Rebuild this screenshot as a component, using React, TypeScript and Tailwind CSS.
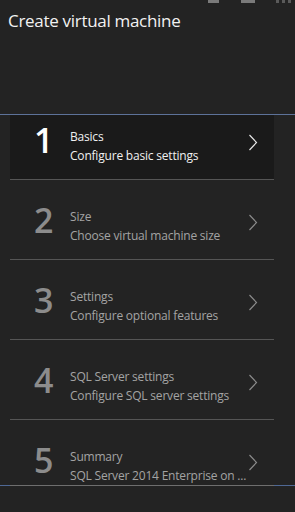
import { ChevronRight } from "lucide-react";

type Step = {
  num: string;
  title: string;
  desc: string;
};

const steps: Step[] = [
  { num: "1", title: "Basics", desc: "Configure basic settings" },
  { num: "2", title: "Size", desc: "Choose virtual machine size" },
  { num: "3", title: "Settings", desc: "Configure optional features" },
  { num: "4", title: "SQL Server settings", desc: "Configure SQL server settings" },
  { num: "5", title: "Summary", desc: "SQL Server 2014 Enterprise on ..." },
];

function Chevron({ active }: { active: boolean }) {
  return (
    <svg
      width="10"
      height="17"
      viewBox="0 0 10 17"
      fill="none"
      stroke={active ? "#e6e6e6" : "#8a8a8a"}
      strokeWidth={1.2}
      className="mt-[11px] shrink-0"
    >
      <path d="M1.5 1 L8.5 8.5 L1.5 16" />
    </svg>
  );
}

export default function App() {
  return (
    <div className="w-[295px] h-[512px] bg-[#232323] overflow-hidden font-['Open_Sans',sans-serif]">
      {/* cut-off window controls */}
      <div className="h-[4px] flex">
        <div className="ml-[208px] w-[11px] h-[3px] bg-[#7a7a7a]" />
        <div className="ml-[22px] w-[14px] h-[3px] bg-[#7a7a7a]" />
        <div className="ml-[21px] flex gap-[3px]">
          <div className="w-[3px] h-[3px] bg-[#5a5a5a]" />
          <div className="w-[3px] h-[3px] bg-[#5a5a5a]" />
          <div className="w-[3px] h-[3px] bg-[#5a5a5a]" />
        </div>
      </div>

      <div className="h-[110px] pt-[5px]">
        <h1 className="ml-[8px] text-[17px] leading-[24px] text-[#f2f2f2] tracking-[-0.3px]">
          Create virtual machine
        </h1>
      </div>

      <div className="h-px bg-[#5d7299]" />

      <div className="h-[370px] overflow-hidden">
        <div className="-mt-[15px]">
          {steps.map((s, i) => {
            const active = i === 0;
            return (
              <div
                key={s.num}
                className={`mx-[10px] w-[264px] h-[80px] flex items-start pt-[23px] border-b border-[#555555] ${
                  active ? "bg-[#1a1a1a]" : ""
                }`}
              >
                <div
                  className={`w-[60px] shrink-0 pl-[24px] text-[34px] leading-[34px] font-semibold ${
                    active ? "text-white" : "text-[#8c8c8c]"
                  }`}
                >
                  {s.num}
                </div>
                <div
                  className={`flex-1 min-w-0 pt-[4px] text-[12px] leading-[19px] tracking-[-0.2px] ${
                    active ? "text-[#f0f0f0]" : "text-[#a3a3a3]"
                  }`}
                >
                  <div>{s.title}</div>
                  <div className="whitespace-nowrap">{s.desc}</div>
                </div>
                <div className="w-[26px] shrink-0 flex">
                  <Chevron active={active} />
                </div>
              </div>
            );
          })}
        </div>
      </div>

      <div className="flex h-px">
        <div className="w-[10px] bg-[#4f6894]" />
        <div className="w-[264px] bg-[#6e6e6e]" />
        <div className="flex-1 bg-[#4f6894]" />
      </div>
    </div>
  );
}
